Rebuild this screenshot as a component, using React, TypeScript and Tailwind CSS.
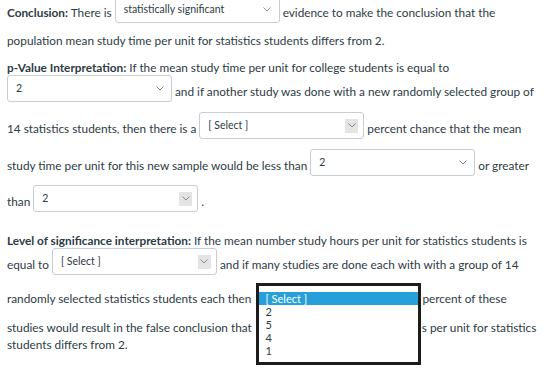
import { ReactNode } from "react";

function Chevron({ shaded }: { shaded?: boolean }) {
  return (
    <span
      className={`ml-auto mr-[5px] flex h-[14px] w-[13px] items-center justify-center ${
        shaded ? "bg-[#e4e4e4]" : ""
      }`}
    >
      <svg width="8" height="5" viewBox="0 0 8 5">
        <path d="M0.5 0.5 L4 4 L7.5 0.5" fill="none" stroke="#8a8a8a" strokeWidth="1" />
      </svg>
    </span>
  );
}

function Select({ value, shaded }: { value: string; shaded?: boolean }) {
  return (
    <div className="flex h-[27px] w-[165px] shrink-0 items-center rounded-[3px] border border-[#c7cdd1] bg-white pl-[8px]">
      <span className="pb-[1px] text-[10.5px] leading-none">{value}</span>
      <Chevron shaded={shaded} />
    </div>
  );
}

// a line that holds a dropdown; the text sits a little lower than the box centre
function Row({ children, className = "" }: { children: ReactNode; className?: string }) {
  return <div className={`flex h-[27px] items-center gap-[3px] ${className}`}>{children}</div>;
}

function T({ children }: { children: ReactNode }) {
  return <span className="mt-[6px] whitespace-nowrap">{children}</span>;
}

function Line({ children, className = "" }: { children: ReactNode; className?: string }) {
  return <div className={`h-[15px] whitespace-nowrap leading-[15px] ${className}`}>{children}</div>;
}

export default function App() {
  const options = ["2", "5", "4", "1"];

  return (
    <div className="h-[375px] w-[545px] overflow-hidden bg-white">
      <div className="-mt-[4px] px-[7px] font-[Lato,sans-serif] text-[11.8px] text-[#2d3b45]">
        <Row>
          <T>
            <b>Conclusion:</b> There is
          </T>
          <Select value="statistically significant" />
          <T>evidence to make the conclusion that the</T>
        </Row>
        <Line className="mt-[10px]">
          population mean study time per unit for statistics students differs from 2.
        </Line>

        {/* p-value */}
        <Line className="mt-[12px]">
          <b>p-Value Interpretation:</b> If the mean study time per unit for college students is equal to
        </Line>
        <Row>
          <Select value="2" />
          <T>and if another study was done with a new randomly selected group of</T>
        </Row>
        <Row className="mt-[10px]">
          <T>14 statistics students, then there is a</T>
          <Select value="[ Select ]" shaded />
          <T>percent chance that the mean</T>
        </Row>
        <Row className="mt-[10px]">
          <T>study time per unit for this new sample would be less than</T>
          <Select value="2" />
          <T>or greater</T>
        </Row>
        <Row className="mt-[9px]">
          <T>than</T>
          <Select value="2" shaded />
          <T>.</T>
        </Row>

        {/* level of significance */}
        <Line className="mt-[21px]">
          <b>Level of significance interpretation:</b> If the mean number study hours per unit for statistics students is
        </Line>
        <Row>
          <T>equal to</T>
          <Select value="[ Select ]" shaded />
          <T>and if many studies are done each with with a group of 14</T>
        </Row>
        <Row className="relative z-10 mt-[7px]">
          <T>randomly selected statistics students each then</T>
          <div className="relative">
            {/* the open list covers the closed box */}
            <div className="h-[27px] w-[165px]" />
            <div className="absolute left-[2px] top-[1px] w-[165px] border-[3px] border-[#1c1c1c] bg-white pb-[5px] pt-[6px] text-[11px] leading-[13px]">
              <div className="h-[13px] bg-[#279fd9] pl-[6px] text-white">[ Select ]</div>
              {options.map((o) => (
                <div key={o} className="h-[13px] pl-[6px]">
                  {o}
                </div>
              ))}
            </div>
          </div>
          <T>percent of these</T>
        </Row>
        <Line className="mt-[11px] flex">
          <span>studies would result in the false conclusion that&nbsp;</span>
          <span className="invisible w-[167px] overflow-hidden">the population mean study hour</span>
          <span>s per unit for statistics</span>
        </Line>
        <Line className="mt-[2px]">students differs from 2.</Line>
      </div>
    </div>
  );
}
